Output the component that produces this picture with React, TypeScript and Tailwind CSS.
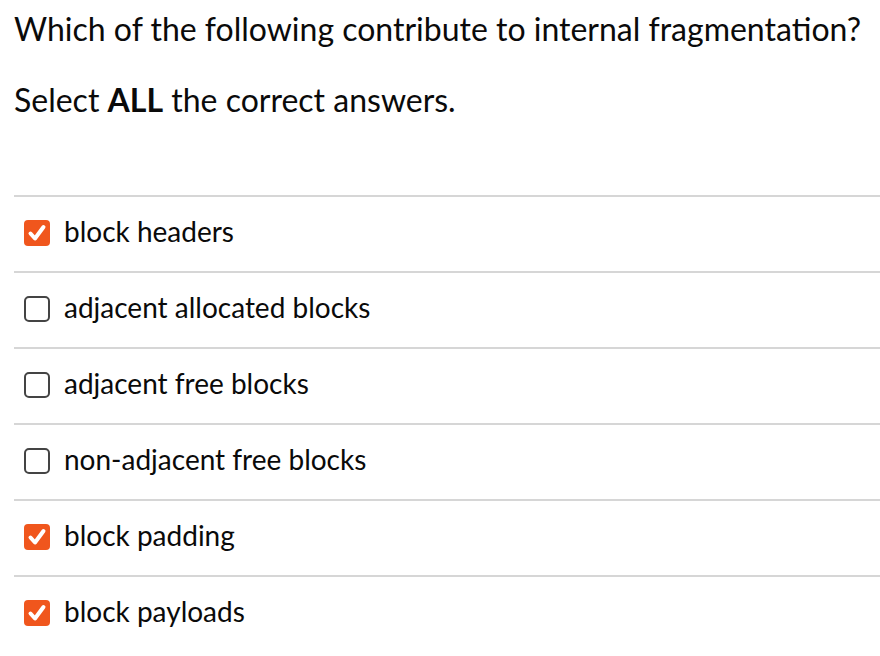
const options = [
  { label: "block headers", checked: true },
  { label: "adjacent allocated blocks", checked: false },
  { label: "adjacent free blocks", checked: false },
  { label: "non-adjacent free blocks", checked: false },
  { label: "block padding", checked: true },
  { label: "block payloads", checked: true },
];

const Box = ({ checked }: { checked: boolean }) =>
  checked ? (
    <span className="flex h-[26px] w-[26px] shrink-0 items-center justify-center rounded-[4px] bg-[#f0561d]">
      <svg viewBox="0 0 26 26" className="h-[26px] w-[26px]">
        <path
          d="M6.5 13.5 L11 18.5 L19.5 7"
          fill="none"
          stroke="white"
          strokeWidth="4"
          strokeLinecap="round"
          strokeLinejoin="round"
        />
      </svg>
    </span>
  ) : (
    <span className="h-[26px] w-[26px] shrink-0 rounded-[5px] border-[2.5px] border-[#444]" />
  );

export default function App() {
  return (
    <div className="h-[656px] w-[880px] overflow-hidden bg-white pl-[14px] font-['Lato','Liberation_Sans',sans-serif] text-[#0a0a0a]">
      <h1 className="pt-[9px] text-[32px] leading-[40px] font-normal">
        Which of the following contribute to internal fragmentation?
      </h1>
      <p className="mt-[31px] text-[32px] leading-[40px]">
        Select <b className="font-bold">ALL</b> the correct answers.
      </p>
      <div className="mt-[75px]">
        {options.map((o) => (
          <label
            key={o.label}
            className="flex h-[76px] items-center gap-[14px] border-t-2 border-[#d6d6d6] pl-[10px] pb-[3px]"
          >
            <Box checked={o.checked} />
            <span className="pb-[3px] text-[28px] leading-none">{o.label}</span>
          </label>
        ))}
      </div>
    </div>
  );
}
